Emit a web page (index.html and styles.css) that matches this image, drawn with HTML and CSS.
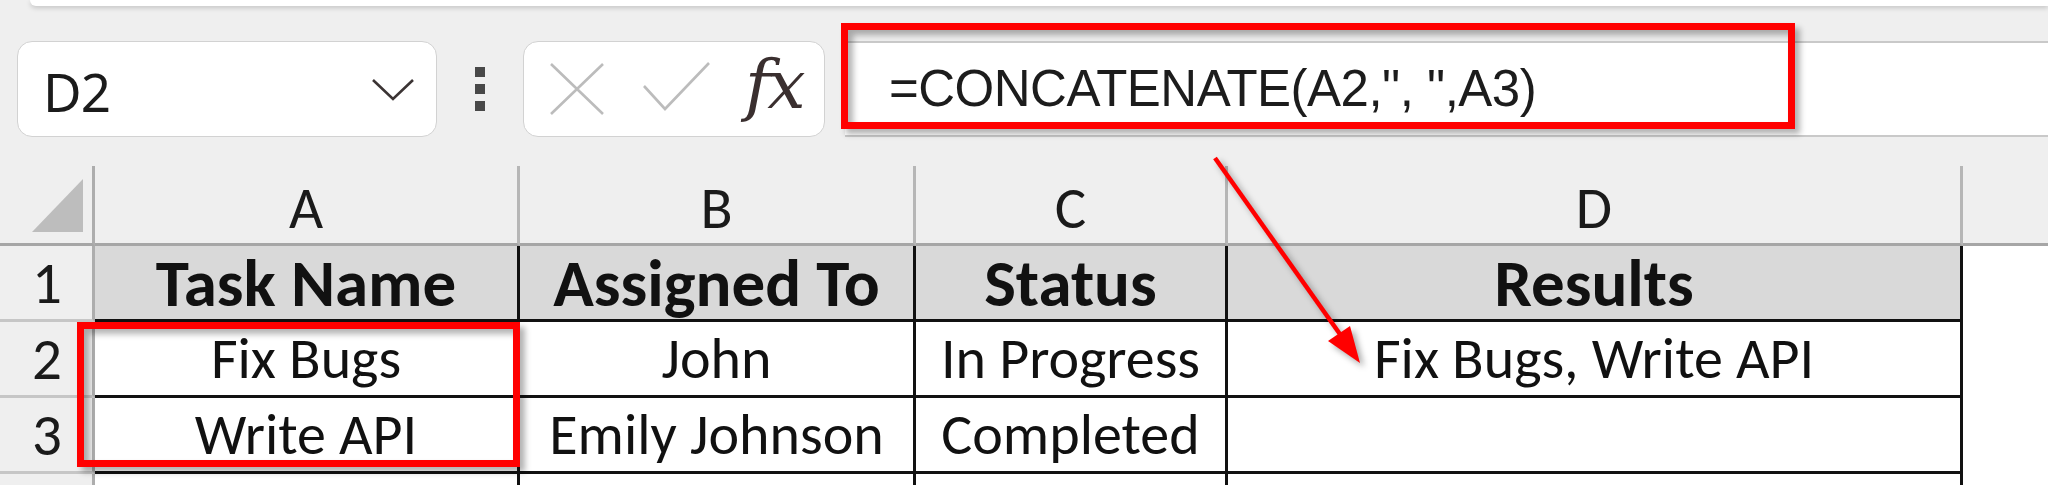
FILE: index.html
```html
<!DOCTYPE html>
<html>
<head>
<meta charset="utf-8">
<link rel="stylesheet" href="styles.css">
</head>
<body>
<div class="app">
  <div class="topbar"></div>
  <div class="toolbar">
    <div class="namebox">
      <span class="name">D2</span>
      <svg class="chev" width="44" height="24" viewBox="0 0 44 24"><path d="M2 2 L22 21 L42 2" fill="none" stroke="#3b3434" stroke-width="2.6"/></svg>
    </div>
    <div class="dots"><i></i><i></i><i></i></div>
    <div class="fxbox">
      <svg class="ico" width="56" height="54" viewBox="0 0 56 54"><path d="M2 2 L54 52 M2 52 L54 2" stroke="#bcbcbc" stroke-width="2.6" fill="none"/></svg>
      <svg class="ico" width="68" height="52" viewBox="0 0 68 52"><path d="M1 25 L22 48 L66 2" stroke="#bcbcbc" stroke-width="2.6" fill="none"/></svg>
      <span class="fx">fx</span>
    </div>
    <div class="formula">=CONCATENATE(A2,", ",A3)</div>
  </div>
  <div class="grid">
    <div class="corner"><span class="tri"></span></div>
    <div class="ch">A</div>
    <div class="ch">B</div>
    <div class="ch">C</div>
    <div class="ch">D</div>
    <div class="ch ch-e"></div>

    <div class="rh">1</div>
    <div class="c hd">Task Name</div>
    <div class="c hd">Assigned To</div>
    <div class="c hd">Status</div>
    <div class="c hd">Results</div>
    <div class="c e"></div>

    <div class="rh">2</div>
    <div class="c">Fix Bugs</div>
    <div class="c">John</div>
    <div class="c">In Progress</div>
    <div class="c">Fix Bugs, Write API</div>
    <div class="c e"></div>

    <div class="rh">3</div>
    <div class="c">Write API</div>
    <div class="c">Emily Johnson</div>
    <div class="c">Completed</div>
    <div class="c"></div>
    <div class="c e"></div>

    <div class="rh"></div>
    <div class="c"></div>
    <div class="c"></div>
    <div class="c"></div>
    <div class="c"></div>
    <div class="c e"></div>
  </div>

  <div class="mark mark-formula"></div>
  <div class="mark mark-cells"></div>
  <svg class="arrow" width="200" height="240" viewBox="1200 140 200 240">
    <line x1="1215" y1="158" x2="1342" y2="337" stroke="#ff0000" stroke-width="4.5"/>
    <polygon points="1360,363 1328,341 1350,326" fill="#ff0000"/>
  </svg>
</div>
</body>
</html>
```
FILE: styles.css
```css
* { box-sizing: border-box; }
html, body { margin: 0; padding: 0; }
body {
  width: 2048px;
  height: 485px;
  overflow: hidden;
  background: #efefef;
  font-family: Carlito, Lato, "Liberation Sans", sans-serif;
  color: #111;
}
.app { position: relative; width: 2048px; height: 485px; overflow: hidden; }

.topbar {
  height: 6px;
  margin-left: 30px;
  background: #fff;
  border-bottom-left-radius: 8px;
  box-shadow: 0 2px 5px rgba(0,0,0,0.18);
}

.toolbar {
  display: flex;
  align-items: center;
  height: 96px;
  margin-top: 35px;
  padding-left: 17px;
}
.namebox {
  width: 420px;
  height: 96px;
  background: #fff;
  border: 1.5px solid #d2d2d2;
  border-radius: 15px;
  display: flex;
  align-items: center;
  justify-content: space-between;
  padding: 0 21px 0 25px;
}
.name {
  font-family: "Noto Sans", "Liberation Sans", sans-serif;
  font-size: 53px;
  color: #1b1b1b;
  letter-spacing: -1px;
  margin-top: 4px;
}
.chev { margin-top: 2px; }
.dots {
  width: 10px;
  margin-left: 38px;
  display: flex;
  flex-direction: column;
  gap: 7px;
}
.dots i { display: block; width: 10px; height: 10px; background: #484848; }
.fxbox {
  width: 302px;
  height: 96px;
  margin-left: 38px;
  background: #fff;
  border: 1.5px solid #d2d2d2;
  border-radius: 15px;
  display: flex;
  align-items: center;
  padding-left: 25px;
  gap: 38px;
}
.fxbox .ico:nth-child(2) { margin-top: -4px; }
.fx {
  font-family: "DejaVu Serif", "Liberation Serif", serif;
  font-style: italic;
  font-size: 68px;
  color: #3a2f2f;
  margin-left: -4px;
  margin-top: -10px;
  letter-spacing: -3px;
}
.formula {
  flex: 1;
  height: 96px;
  margin-left: 20px;
  background: #fff;
  border-top: 2px solid #c9c9c9;
  border-bottom: 2px solid #c9c9c9;
  font-family: "Liberation Sans", sans-serif;
  font-size: 51px;
  line-height: 92px;
  padding-left: 44px;
  color: #1c1c1c;
  letter-spacing: -0.5px;
}

.grid {
  margin-top: 29px;
  display: grid;
  grid-template-columns: 95px 425px 396px 312px 735px 1fr;
  grid-template-rows: 80px 76px 76px 76px 76px;
}
.corner {
  position: relative;
  border-right: 3px solid #adadad;
  border-bottom: 3px solid #a6a6a6;
}
.tri {
  position: absolute;
  left: 32px;
  top: 13px;
  width: 51px;
  height: 53px;
  background: #bdbdbd;
  clip-path: polygon(100% 0, 100% 100%, 0 100%);
}
.ch {
  border-right: 3px solid #b6b6b6;
  border-bottom: 3px solid #a6a6a6;
  display: flex;
  align-items: center;
  justify-content: center;
  font-size: 59px;
  color: #1a1a1a;
  padding-top: 6px;
}
.ch-e { border-right: none; }
.rh {
  border-right: 3px solid #adadad;
  border-bottom: 3px solid #c6c6c6;
  display: flex;
  align-items: center;
  justify-content: center;
  font-size: 59px;
  color: #1a1a1a;
  padding-left: 2px;
}
.c {
  background: #fff;
  border-right: 3px solid #111;
  border-bottom: 3px solid #111;
  display: flex;
  align-items: flex-end;
  justify-content: center;
  font-size: 58px;
  line-height: 1;
  padding-bottom: 7px;
  white-space: nowrap;
}
.c.hd {
  background: #d9d9d9;
  font-weight: bold;
  font-size: 67px;
  padding-bottom: 2px;
}
.c.e { border: none; background: #fff; }

.mark {
  position: absolute;
  border: 7px solid #ff0000;
  box-shadow: 5px 5px 6px rgba(0,0,0,0.3), inset 5px 5px 6px rgba(0,0,0,0.3);
}
.mark-formula { left: 841px; top: 23px; width: 954px; height: 106px; }
.mark-cells { left: 77px; top: 322px; width: 443px; height: 145px; }
.arrow {
  position: absolute;
  left: 1200px;
  top: 140px;
  filter: drop-shadow(4px 4px 3px rgba(0,0,0,0.35));
}
```
